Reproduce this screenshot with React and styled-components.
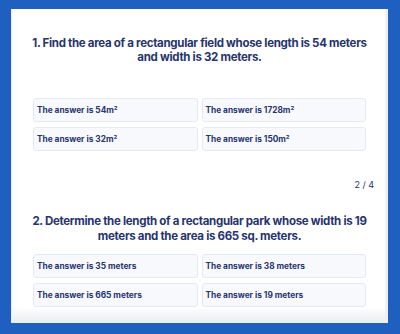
import React from "react";
import styled, { createGlobalStyle } from "styled-components";

const GlobalStyle = createGlobalStyle`
  html, body {
    margin: 0;
    padding: 0;
    background: #1f5fbf;
    font-family: "Inter", "Noto Sans", sans-serif;
  }
`;

const Page = styled.div`
  width: 400px;
  height: 334px;
  box-sizing: border-box;
  padding: 9px 12px 11px 11px;
  background: #1f5fbf;
`;

const Panel = styled.div`
  position: relative;
  height: 100%;
  box-sizing: border-box;
  background: #ffffff;
  border-left: 1px solid #e8ecf6;
  border-right: 3px solid #eef0f5;
  padding: 27px 19px 0 21px;
  overflow: hidden;

  &::after {
    content: "";
    position: absolute;
    left: 0;
    right: 0;
    bottom: 0;
    height: 16px;
    background: linear-gradient(to bottom, rgba(240, 241, 245, 0), #ebecf1);
  }
`;

const Question = styled.h2`
  margin: 0 -8px;
  font-size: 11.5px;
  line-height: 14px;
  font-weight: 700;
  letter-spacing: -0.3px;
  white-space: nowrap;
  color: #27346f;
  text-align: center;
`;

const Grid = styled.div`
  display: grid;
  grid-template-columns: 1fr 1fr;
  gap: 5px 4px;
  margin-top: ${(p) => p.$top}px;
`;

const Answer = styled.div`
  height: 24px;
  box-sizing: border-box;
  display: flex;
  align-items: center;
  padding: 0 3px;
  background: #f8f9fd;
  border: 1px solid #e5e9f7;
  border-radius: 3px;
  font-size: 8.3px;
  font-weight: 700;
  color: #27346f;
`;

const Pager = styled.div`
  margin: 28px -8px 0 0;
  text-align: right;
  font-size: 9px;
  color: #27346f;
  line-height: 11px;
`;

const Second = styled(Question)`
  margin-top: 24px;
  line-height: 15px;
`;

const q1 = ["The answer is 54m²", "The answer is 1728m²", "The answer is 32m²", "The answer is 150m²"];
const q2 = ["The answer is 35 meters", "The answer is 38 meters", "The answer is 665 meters", "The answer is 19 meters"];

export default function App() {
  return (
    <Page>
      <GlobalStyle />
      <Panel>
        <Question>
          1. Find the area of a rectangular field whose length is 54 meters
          <br />
          and width is 32 meters.
        </Question>
        <Grid $top={34}>
          {q1.map((a) => (
            <Answer key={a}>{a}</Answer>
          ))}
        </Grid>
        <Pager>2 / 4</Pager>
        <Second>
          2. Determine the length of a rectangular park whose width is 19
          <br />
          meters and the area is 665 sq. meters.
        </Second>
        <Grid $top={10}>
          {q2.map((a) => (
            <Answer key={a}>{a}</Answer>
          ))}
        </Grid>
      </Panel>
    </Page>
  );
}
